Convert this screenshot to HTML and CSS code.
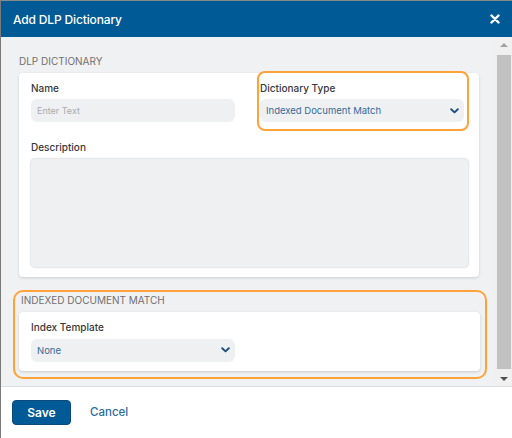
FILE: index.html
```html
<!DOCTYPE html>
<html>
<head>
<meta charset="utf-8">
<link rel="stylesheet" href="styles.css">
</head>
<body>
<div class="dialog">
  <div class="header">
    <span class="title">Add DLP Dictionary</span>
    <svg class="close" width="10" height="10" viewBox="0 0 10 10"><path d="M1.5 1.5 L8.5 8.5 M8.5 1.5 L1.5 8.5" stroke="#fff" stroke-width="2.4" stroke-linecap="round"/></svg>
  </div>
  <div class="body">
    <div class="content">
      <div class="section-title">DLP DICTIONARY</div>
      <div class="card">
        <div class="grid">
          <div class="field">
            <div class="label">Name</div>
            <div class="input placeholder">Enter Text</div>
          </div>
          <div class="field highlighted">
            <div class="label">Dictionary Type</div>
            <div class="input select">
              <span>Indexed Document Match</span>
              <svg width="9" height="6" viewBox="0 0 9 6"><path d="M1.2 1.2 L4.5 4.4 L7.8 1.2" fill="none" stroke="#1d4f80" stroke-width="1.9" stroke-linecap="round" stroke-linejoin="round"/></svg>
            </div>
            <div class="mark"></div>
          </div>
        </div>
        <div class="label desc-label">Description</div>
        <div class="textarea"></div>
      </div>
      <div class="idm">
        <div class="section-title idm-title">INDEXED DOCUMENT MATCH</div>
        <div class="card card2">
          <div class="half">
            <div class="label">Index Template</div>
            <div class="input select">
              <span>None</span>
              <svg width="9" height="6" viewBox="0 0 9 6"><path d="M1.2 1.2 L4.5 4.4 L7.8 1.2" fill="none" stroke="#1d4f80" stroke-width="1.9" stroke-linecap="round" stroke-linejoin="round"/></svg>
            </div>
          </div>
        </div>
      </div>
    </div>
    <div class="scrollbar">
      <div class="arrow up"></div>
      <div class="thumb"></div>
      <div class="arrow down"></div>
    </div>
  </div>
  <div class="footer">
    <button class="save">Save</button>
    <span class="cancel">Cancel</span>
  </div>
</div>
</body>
</html>
```
FILE: styles.css
```css
* { box-sizing: border-box; }
html, body { margin: 0; padding: 0; }
body {
  width: 512px;
  height: 438px;
  overflow: hidden;
  font-family: Inter, "Noto Sans", sans-serif;
  background: #fff;
}
.dialog {
  width: 512px;
  height: 438px;
  border-top: 1px solid #8a8a8a;
  border-left: 1px solid #7a7a7a;
  display: flex;
  flex-direction: column;
}
.header {
  height: 36px;
  background: #005a96;
  display: flex;
  align-items: center;
  justify-content: space-between;
  padding: 0 12px 0 12px;
}
.title {
  color: #fff;
  font-size: 12px;
  font-weight: 500;
  letter-spacing: -0.15px;
}
.close { margin-top: -1px; }
.body {
  height: 350px;
  background: #f0f1f3;
  border-bottom: 1px solid #dcdddf;
  display: flex;
}
.content {
  flex: 1;
  padding: 18px 16px 0 18px;
}
.section-title {
  font-size: 10px;
  line-height: 13px;
  color: #707070;
}
.card {
  background: #fff;
  border-radius: 4px;
  box-shadow: 0 1px 3px rgba(0,0,0,0.16);
  margin-top: 5px;
  padding: 8px 12px 9px 12px;
}
.grid {
  display: grid;
  grid-template-columns: 204px 204px;
  column-gap: 25px;
}
.field { position: relative; }
.label {
  font-size: 10px;
  line-height: 14px;
  font-weight: 500;
  color: #383838;
  margin-bottom: 4px;
}
.input {
  height: 23px;
  background: #eff0f2;
  border-radius: 6px;
  font-size: 9.5px;
  padding: 0 6px;
  display: flex;
  align-items: center;
}
.placeholder { color: #a9abae; font-size: 9px; }
.select {
  justify-content: space-between;
  color: #346b9b;
  padding-right: 5px;
}
.mark {
  position: absolute;
  left: -3px;
  top: -10px;
  right: -5px;
  bottom: -9px;
  border: 2.5px solid #ffa23a;
  border-radius: 8px;
  pointer-events: none;
}
.desc-label { margin-top: 18px; }
.textarea {
  height: 110px;
  background: #eff0f2;
  border: 1px solid #e6e7e9;
  border-radius: 5px;
  box-shadow: 0 0 2px rgba(0,0,0,0.08);
  margin-left: -1px;
  margin-right: -2px;
}
.idm {
  margin: 13px -8px 0 -6px;
  border: 2.5px solid #ffa23a;
  border-radius: 10px;
  padding: 1.5px 5px 6px 4px;
}
.idm-title { padding-left: 2px; }
.card2 {
  padding: 8px 12px 9px 12px;
  border-radius: 4px;
}
.half { width: 204px; }
.half .label { margin-bottom: 5px; }
.scrollbar {
  width: 17px;
  background: #f0f0f0;
  display: flex;
  flex-direction: column;
  align-items: center;
  padding: 6px 0 5px 0;
}
.arrow {
  width: 0;
  height: 0;
  border-left: 4px solid transparent;
  border-right: 4px solid transparent;
}
.up { border-bottom: 4px solid #a3a3a3; }
.down { border-top: 4px solid #505050; }
.thumb {
  width: 14px;
  flex: 1;
  background: #c1c1c1;
  margin: 8px 0 8px 1px;
}
.footer {
  flex: 1;
  display: flex;
  align-items: flex-start;
  padding: 13px 0 0 11px;
}
.save {
  width: 59px;
  height: 25px;
  background: #005a96;
  border: 1px solid #0b4a7a;
  border-radius: 4px;
  color: #fff;
  font-family: Inter, "Noto Sans", sans-serif;
  font-size: 12px;
  font-weight: 600;
  padding: 0;
}
.cancel {
  margin-left: 19px;
  margin-top: 5px;
  font-size: 11.5px;
  font-weight: 500;
  color: #2c6ba1;
}
```
